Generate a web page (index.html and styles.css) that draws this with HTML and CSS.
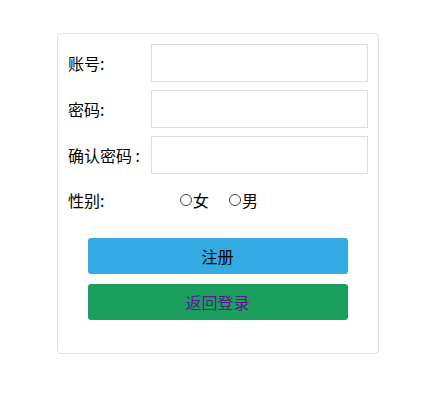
FILE: index.html
```html
<!DOCTYPE html>
<html lang="zh">
<head>
<meta charset="utf-8">
<title>注册</title>
<link rel="stylesheet" href="styles.css">
</head>
<body>
<div class="card">
  <form class="form">
    <div class="row">
      <label class="label">账号:</label>
      <input class="field" type="text">
    </div>
    <div class="row">
      <label class="label">密码:</label>
      <input class="field" type="password">
    </div>
    <div class="row">
      <label class="label">确认密码 :</label>
      <input class="field" type="password">
    </div>
    <div class="row gender">
      <span class="label">性别:</span>
      <div class="radios">
        <label class="opt"><input class="radio" type="radio" name="sex">女</label>
        <label class="opt"><input class="radio" type="radio" name="sex">男</label>
      </div>
    </div>
    <div class="actions">
      <button class="btn btn-blue" type="button">注册</button>
      <a class="btn btn-green" href="#">返回登录</a>
    </div>
  </form>
</div>
</body>
</html>
```

FILE: styles.css
```css
html, body {
  margin: 0;
  padding: 0;
  background: #fff;
}
body {
  font-family: "Noto Sans CJK SC", "Noto Sans", sans-serif;
  font-size: 16px;
  color: #000;
}
.card {
  box-sizing: border-box;
  width: 322px;
  height: 321px;
  margin: 33px 0 0 57px;
  border: 1px solid #dedede;
  border-radius: 4px;
  padding: 10px 9px 0 10px;
}
.form {
  display: flex;
  flex-direction: column;
  gap: 8px;
}
.row {
  display: flex;
  align-items: center;
  height: 38px;
}
.label {
  width: 83px;
  flex: none;
  line-height: 20px;
}
.field {
  box-sizing: border-box;
  width: 217px;
  height: 38px;
  border: 1px solid #dcdcdc;
  margin: 0;
  padding: 0 8px;
  font: inherit;
  outline: none;
}
.gender {
  margin-top: -1px;
}
.radios {
  display: flex;
  align-items: center;
  gap: 20px;
  padding-left: 29px;
}
.opt {
  display: flex;
  align-items: center;
  line-height: 20px;
}
.radio {
  appearance: none;
  -webkit-appearance: none;
  box-sizing: border-box;
  width: 12px;
  height: 12px;
  margin: 0 1px 0 0;
  border: 1px solid #444;
  border-radius: 50%;
  background: #fff;
}
.actions {
  display: flex;
  flex-direction: column;
  align-items: center;
  gap: 10px;
  margin-top: 11px;
  margin-left: -2px;
}
.btn {
  box-sizing: border-box;
  width: 260px;
  height: 36px;
  border: none;
  border-radius: 3px;
  display: flex;
  align-items: center;
  justify-content: center;
  font: inherit;
  text-decoration: none;
  padding: 0;
}
.btn-blue {
  background: #33aae2;
  color: #000;
}
.btn-green {
  background: #1a9f5d;
  color: #551a8b;
}
```
